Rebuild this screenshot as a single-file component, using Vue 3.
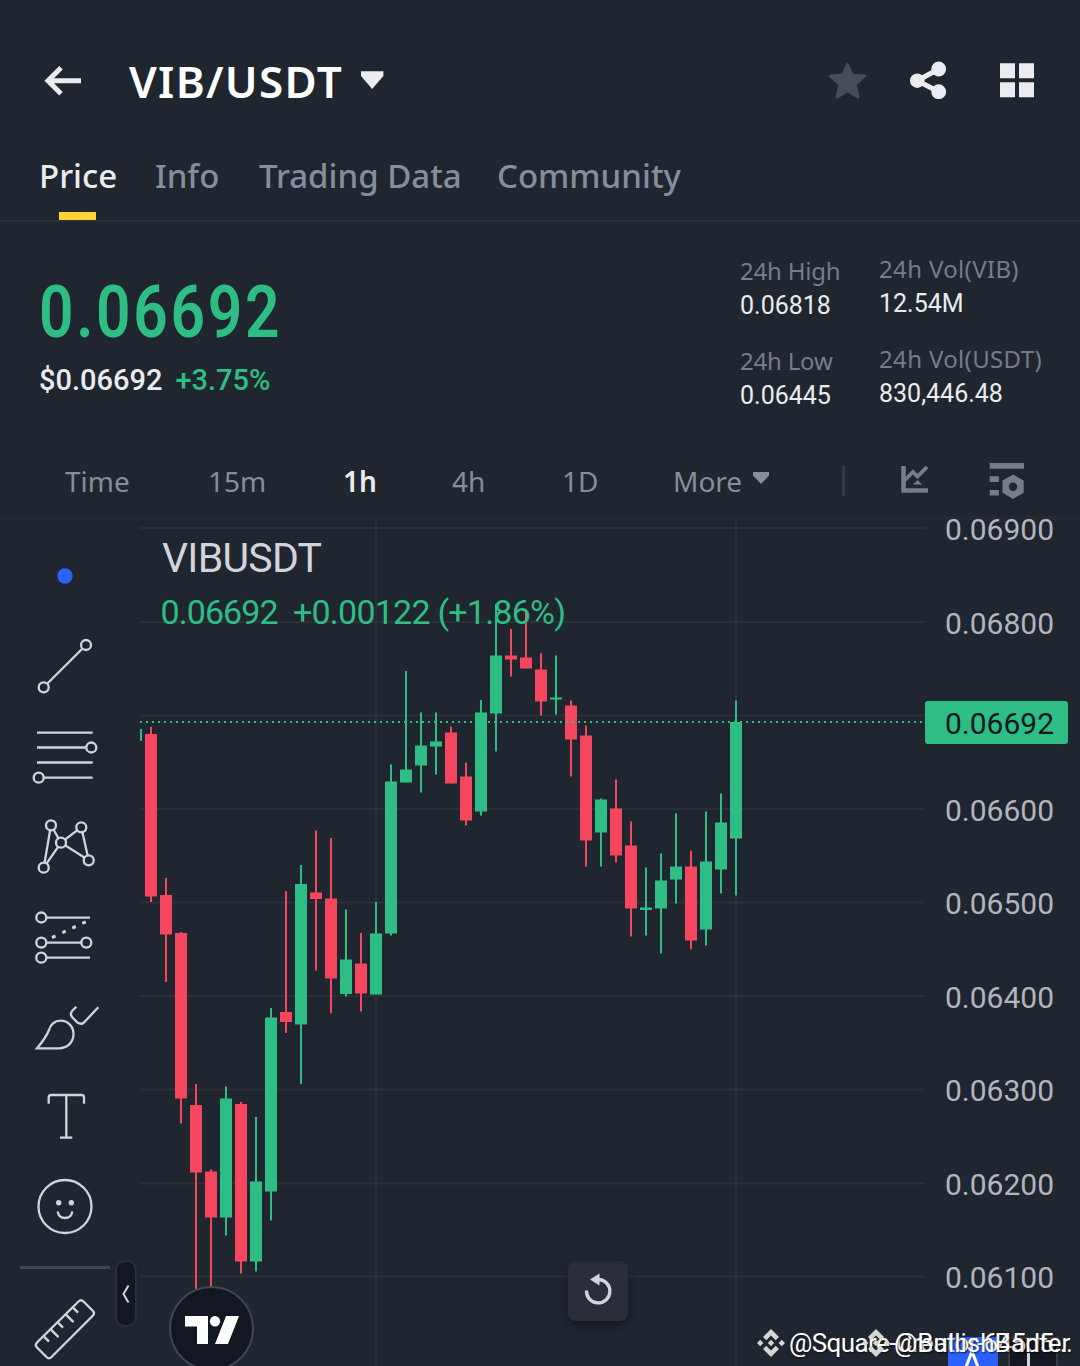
<template>
  <div class="screen">
    <header class="header">
      <svg class="back" viewBox="0 0 40 40" fill="none" stroke="#eaecef" stroke-width="5">
        <path d="M39 20.7H6M19 7.7L6 20.7l13 13" />
      </svg>
      <h1 class="pair"><span>VIB/USDT</span></h1>
      <svg class="caret" viewBox="0 0 24 20" fill="#eaecef"><path d="M1 1.3h22.4V6L12.2 19 1 6z" /></svg>
      <div class="actions">
        <svg class="action" viewBox="0 0 44 44" fill="#474d57" stroke="#474d57" stroke-width="3" stroke-linejoin="round">
          <path d="M22.500 5.500l4.700 10.500 12.300 1-9.300 8.500 2.800 12.500-10.500-6-10.500 6 2.800-12.500-9.300-8.500 12.300-1z" />
        </svg>
        <svg class="action" viewBox="0 0 44 44" fill="#eaecef">
          <path d="M32.700 10L11.300 21.700l21.400 11" fill="none" stroke="#eaecef" stroke-width="5" />
          <circle cx="11.300" cy="21.700" r="7.300" /><circle cx="32.700" cy="10" r="7.400" /><circle cx="32.700" cy="32.700" r="7.400" />
        </svg>
        <svg class="action" viewBox="0 0 44 44" fill="#eaecef">
          <path d="M5 4.300h15v15H5zM24 4.300h15v15H24zM5 23.300h15v15H5zM24 23.300h15v15H24z" />
        </svg>
      </div>
    </header>

    <nav class="tabs">
      <a v-for="t in tabs" :key="t" class="tab" :class="{ active: t === activeTab }" @click="activeTab = t">{{ t }}</a>
    </nav>

    <section class="summary">
      <div class="price-block">
        <div class="price"><span>0.06692</span></div>
        <div class="price-sub"><span class="fiat">$0.06692</span><span class="change">+3.75%</span></div>
      </div>
      <div class="stats stats-left">
        <div v-for="s in rangeStats" :key="s.label" class="stat">
          <div class="stat-label">{{ s.label }}</div>
          <div class="stat-value">{{ s.value }}</div>
        </div>
      </div>
      <div class="stats stats-right">
        <div v-for="s in volumeStats" :key="s.label" class="stat">
          <div class="stat-label">{{ s.label }}</div>
          <div class="stat-value">{{ s.value }}</div>
        </div>
      </div>
    </section>

    <div class="intervals">
      <span v-for="i in intervals" :key="i" class="interval" :class="{ active: i === activeInterval }" @click="activeInterval = i">{{ i }}</span>
      <span class="interval more">More
        <svg class="more-caret" viewBox="0 0 16 12" fill="#848e9c"><path d="M0 0h16v3.500L8 12 0 3.500z" /></svg>
      </span>
      <i class="separator"></i>
      <svg class="tool-icon" viewBox="0 0 36 40" fill="none" stroke="#767c89">
        <path d="M6.500 5v24.500H31" stroke-width="4.500" />
        <path d="M7 20l9-9 4.500 4.500L30 6" stroke-width="3.800" />
        <path d="M20.500 19l4.500 4.500h-9z" fill="#767c89" stroke="none" />
      </svg>
      <svg class="tool-icon" viewBox="0 0 36 40" fill="#767c89">
        <path d="M.7 2H35v5.800H.7zM.7 15.200h9.200V21H.7zM.7 29h9.200v5.500H.7z" />
        <path fill-rule="evenodd" d="M24 13.500l10.700 6v12.300L24 38l-10.500-6.200V19.500zM24 21.500a4.200 4.200 0 100 8.400 4.200 4.200 0 000-8.400z" />
      </svg>
    </div>

    <main class="workspace">
      <aside class="toolbar">
        <svg class="tool" viewBox="0 0 90 90"><circle cx="45" cy="45" r="7.700" fill="#2962ff" /></svg>
        <svg class="tool line" viewBox="0 0 90 90">
          <path d="M27.700 62.300l34.300-34.300" /><circle cx="66" cy="24" r="5" /><circle cx="23.700" cy="66.300" r="5" />
        </svg>
        <svg class="tool line" viewBox="0 0 90 90">
          <path d="M17 21.600h55.700M17 36.500h49M17 51.500h55.700M24 66.700h48.700" />
          <circle cx="71.300" cy="36.500" r="5" /><circle cx="18.700" cy="66.700" r="5" />
        </svg>
        <svg class="tool line" viewBox="0 0 90 90">
          <path d="M31 24.300L23.700 66.700 41 41.700zM41 41.700l20.300-15.400 7.400 33z" />
          <g class="knots">
            <circle cx="31" cy="24.300" r="5" /><circle cx="61.300" cy="26.300" r="5" /><circle cx="41" cy="41.700" r="5" />
            <circle cx="23.700" cy="66.700" r="5" /><circle cx="68.700" cy="59.300" r="5" />
          </g>
        </svg>
        <svg class="tool line" viewBox="0 0 90 90">
          <path d="M27 26.600h43M27 51.600h34M27 66.700h43" />
          <path d="M32 46.500l3.500-1.500M42.300 41.700l3.500-1.500M52.300 37l3.500-1.500M62.300 32.300l3.500-1.500" stroke-width="3" />
          <circle cx="21.300" cy="26.500" r="5" /><circle cx="21.300" cy="51.600" r="5" /><circle cx="66.300" cy="51.600" r="5" /><circle cx="21.300" cy="66.700" r="5" />
        </svg>
        <svg class="tool line" viewBox="0 0 90 90">
          <path d="M17 67.300C24 59 27 54 29 49c2-6 5.500-9.300 11.500-9.300 7 0 13 5.300 13 13.300 0 8-6 14.300-14.500 14.300z" />
          <path d="M56.300 25.700l-3.800 3.800q-3.300 3.500 0 7l5 5q3.500 2.500 6.500 0l14.300-15.200" />
        </svg>
        <svg class="tool line" viewBox="0 0 90 90">
          <path d="M28.700 32.700V26.500q0-2.500 2.500-2.500h30.300q2.500 0 2.500 2.500v6.200M46.300 24v42.700M40 66.700h12.300" />
        </svg>
        <svg class="tool line" viewBox="0 0 90 90">
          <circle cx="45" cy="45.500" r="26.500" />
          <path d="M37.700 50.500q1 6.500 7.300 6.500t7.300-6.500" />
          <circle cx="38.700" cy="41.700" r="2.700" class="dot" /><circle cx="51.300" cy="41.700" r="2.700" class="dot" />
        </svg>
        <hr class="rule" />
        <svg class="tool line" viewBox="0 0 90 90">
          <path d="M58.500 17.500q2.500-2.500 5 0l9.500 9.500q2 2.300 0 4.500L31.500 73q-2.500 2.500-5 0L17 63.500q-2.500-2.500 0-5z" />
          <path d="M24 52.600l5 5M31 45.600l7.500 7.500M38 38.600l5 5M46 30.600l7.500 7.500M53 23.600l5 5" />
        </svg>
        <button class="collapse">
          <svg viewBox="0 0 10 20" fill="none" stroke="#d1d4dc" stroke-width="2"><path d="M7.500 1.500L2.500 10l5 8.500" /></svg>
        </button>
      </aside>

      <section class="chart">
        <svg class="plot" viewBox="140 520 940 846">
          <g fill="#2b2f39">
            <rect v-for="g in gridLines" :key="g.y" x="140" :y="g.y - 1" width="785" height="2" />
            <rect x="375" y="517" width="2" height="849" />
            <rect x="735" y="517" width="2" height="849" />
          </g>
          <rect x="140" y="729" width="2" height="12" fill="#2ebd85" />
          <g v-for="c in candles" :key="c.x" :fill="c.fill">
            <rect :x="c.x - 1" :y="c.high" width="2" :height="c.low - c.high" />
            <rect :x="c.x - 6" :y="c.top" width="12" :height="c.bottom - c.top" />
          </g>
          <path d="M140 722H925" stroke="#2ebd85" stroke-width="2" stroke-dasharray="2 4" />
          <g class="axis">
            <template v-for="g in gridLines" :key="g.label">
              <text v-if="g.label" x="945" :y="g.y + 11.500" textLength="109">{{ g.label }}</text>
            </template>
          </g>
          <rect x="925" y="701" width="143" height="43" rx="3" fill="#2ebd85" />
          <text class="last" x="945" y="733.500" textLength="109">0.06692</text>
          <text class="symbol" x="162" y="571.500" textLength="160">VIBUSDT</text>
          <text class="legend" x="160.500" y="623.500" textLength="118">0.06692</text>
          <text class="legend" x="293" y="623.500" textLength="273">+0.00122 (+1.86%)</text>
        </svg>

        <div class="tv-logo">
          <svg viewBox="0 0 54 28" fill="#fff"><path d="M0 0h23v28H12V10.500H0zM41 0h13L43 28H30z" /><circle cx="30" cy="5.200" r="5.200" /></svg>
        </div>
        <button class="reset">
          <svg viewBox="0 0 30 34" fill="none" stroke="#d1d4dc" stroke-width="3.300">
            <path d="M3.500 17.500a11.700 11.700 0 1011.700-11" /><path d="M16.500.5v12L7 6.500z" fill="#d1d4dc" stroke="none" />
          </svg>
        </button>
        <div class="scale-auto"><svg viewBox="0 0 50 30" fill="none" stroke="#fff" stroke-width="3"><path d="M18 30l6-15.500L30 30" /></svg></div>
        <div class="scale-log"></div>
      </section>
    </main>

    <div v-for="w in watermarks" :key="w.text" class="watermark" :class="w.name">
      <svg viewBox="0 0 28 28" fill="#d6d6d6">
        <path d="M14 0l8 8-3.300 3.300L14 6.600l-4.700 4.700L6 8zM14 28l-8-8 3.300-3.300 4.700 4.700 4.700-4.700L22 20zM14 10.800l3.200 3.200-3.200 3.200-3.200-3.200zM3.200 10.800L6.400 14l-3.200 3.200L0 14zM24.800 10.800L28 14l-3.200 3.200-3.200-3.200z" />
      </svg>
      <span>{{ w.text }}</span>
    </div>
  </div>
</template>

<script setup>
import { ref } from 'vue'

const tabs = ['Price', 'Info', 'Trading Data', 'Community']
const activeTab = ref('Price')

const intervals = ['Time', '15m', '1h', '4h', '1D']
const activeInterval = ref('1h')

const rangeStats = [
  { label: '24h High', value: '0.06818' },
  { label: '24h Low', value: '0.06445' }
]
const volumeStats = [
  { label: '24h Vol(VIB)', value: '12.54M' },
  { label: '24h Vol(USDT)', value: '830,446.48' }
]

const gridLines = [
  { y: 528, label: '0.06900' },
  { y: 622, label: '0.06800' },
  { y: 715.5, label: '' },
  { y: 809, label: '0.06600' },
  { y: 902.5, label: '0.06500' },
  { y: 996, label: '0.06400' },
  { y: 1089.5, label: '0.06300' },
  { y: 1183.5, label: '0.06200' },
  { y: 1276.5, label: '0.06100' }
]

// high, body top, body bottom, low, direction; one candle every 15px
const series = [
  [727, 734, 896.5, 902, 'd'], [878, 895, 934.5, 982, 'd'], [932, 933, 1098.5, 1123.5, 'd'],
  [1084, 1105, 1172.5, 1290, 'd'], [1169.5, 1171.5, 1217.5, 1290, 'd'], [1086.5, 1098.5, 1217.5, 1235.5, 'u'],
  [1102, 1104, 1261.5, 1273.5, 'd'], [1117, 1181.5, 1261.5, 1271.5, 'u'], [1008, 1017.5, 1191.5, 1220.5, 'u'],
  [891, 1012, 1022, 1033, 'd'], [865, 884, 1024.5, 1084, 'u'], [830.5, 892.5, 899, 970.5, 'd'],
  [838, 898.5, 978.5, 1013.5, 'd'], [909.5, 959.5, 994, 996.5, 'u'], [933, 963.5, 993.5, 1011.5, 'd'],
  [902, 933.5, 994.5, 994.5, 'u'], [764.5, 781.5, 933.5, 935.5, 'u'], [671, 769.5, 782.5, 782.5, 'u'],
  [712.5, 745.5, 765.5, 792.5, 'u'], [712.5, 741.5, 746.5, 774.5, 'u'], [726.5, 732.5, 783.5, 783.5, 'd'],
  [762.5, 776.5, 820.5, 825.5, 'd'], [700, 712.5, 811.5, 815.5, 'u'], [604, 655.5, 713.5, 751.5, 'u'],
  [629, 655.5, 659.5, 676.5, 'd'], [611, 657.5, 668.5, 668.5, 'd'], [653.5, 669.5, 701.5, 715.5, 'd'],
  [655.5, 697.5, 699.5, 714.5, 'u'], [700.5, 705.5, 739.5, 776.5, 'd'], [725.5, 735.5, 840.5, 866.5, 'd'],
  [798.5, 799.5, 832.5, 866.5, 'u'], [779.5, 808.5, 855.5, 862.5, 'd'], [821.5, 845.5, 908.5, 936.5, 'd'],
  [867.5, 907.5, 910, 935.5, 'u'], [853.5, 880.5, 908.5, 953.5, 'u'], [813.5, 866.5, 879.5, 903.5, 'u'],
  [850.5, 866.5, 940.5, 949.5, 'd'], [811.5, 861.5, 929.5, 945.5, 'u'], [793.5, 822.5, 869.5, 893.5, 'u'],
  [700.5, 722, 838.5, 895.5, 'u']
]

const candles = series.map(([high, top, bottom, low, dir], i) => ({
  x: 151 + i * 15,
  high,
  top,
  bottom,
  low,
  fill: dir === 'u' ? '#2ebd85' : '#f6465d'
}))

const watermarks = [
  { name: 'first', text: '@Square-Creator-645d5...' },
  { name: 'second', text: '@BullishBanter' }
]
</script>

<style>
body {
  background: #202630;
}
</style>

<style scoped>
* {
  box-sizing: border-box;
}

.screen {
  position: relative;
  display: flex;
  flex-direction: column;
  width: 1080px;
  height: 1366px;
  overflow: hidden;
  background: #202630;
  color: #eaecef;
  font-family: 'Noto Sans', sans-serif;
}

svg {
  display: block;
  flex: none;
}

button {
  padding: 0;
  border: none;
}

.header,
.tabs,
.summary,
.intervals {
  flex: none;
}

.header {
  display: flex;
  align-items: center;
  height: 142px;
  padding: 20px 41px 0 42px;
}

.back { width: 40px; height: 40px; margin-top: -2px; }

.pair {
  width: 213px;
  margin: 0 0 0 47px;
  color: #fff;
  font-size: 44px;
  font-weight: 600;
  letter-spacing: 1.3px;
  white-space: nowrap;
}

.caret { width: 24px; height: 20px; margin: -2px 0 0 18px; }

.actions {
  display: flex;
  gap: 0;
  margin-left: auto;
}

.action { width: 44px; height: 44px; }
.action + .action { margin-left: 37px; }
.action:last-child { margin-left: 45px; }

.tabs {
  display: grid;
  grid-template-columns: 116px 104px 238px auto;
  height: 80px;
  padding-left: 39px;
  border-bottom: 2px solid #2a2f39;
  color: #848e9c;
  font-size: 33px;
  font-weight: 500;
  line-height: 68px;
  white-space: nowrap;
}

.tab {
  position: relative;
}

.tab.active {
  color: #eaecef;
}

.tab.active::after {
  content: '';
  position: absolute;
  left: 20px;
  bottom: 0;
  width: 37px;
  height: 8px;
  background: #fcd535;
}

.summary {
  display: flex;
  height: 222px;
  padding-left: 39px;
}

.price-block {
  width: 701px;
  font-family: Roboto, sans-serif;
}

.price {
  margin-top: 49px;
  color: #2ebd85;
  font-size: 72px;
  font-weight: 600;
  line-height: 84px;
}

.price span {
  display: inline-block;
  letter-spacing: 3.2px;
  transform: scaleX(0.84);
  transform-origin: left;
}

.price-sub {
  display: flex;
  gap: 13px;
  margin-top: 7px;
  font-size: 29px;
  font-weight: 500;
  line-height: 36px;
}

.change { color: #2ebd85; }

.stats {
  padding-top: 31px;
  font-size: 25px;
  line-height: 35px;
  white-space: nowrap;
}

.stats-left { width: 139px; }
.stats-right { padding-top: 29px; }

.stat { height: 90px; }
.stat-label { color: #767c89; font-size: 24px; letter-spacing: -0.2px; }
.stats-right .stat-label { letter-spacing: 0.35px; }
.stat-value { font-family: Roboto, sans-serif; }

.intervals {
  display: grid;
  grid-template-columns: 143px 135px 109px 110px 111px 169px 55px 92px 36px;
  align-items: center;
  height: 76px;
  padding: 1px 0 0 65px;
  border-bottom: 4px solid #252932;
  color: #848e9c;
  font-size: 28px;
}

.interval.active {
  color: #eaecef;
  font-weight: 600;
}

.more {
  display: flex;
  align-items: center;
  gap: 11px;
}

.more-caret { width: 16px; height: 12px; margin-top: -5px; }
.separator { width: 3px; height: 30px; background: #343943; }
.tool-icon { width: 36px; height: 40px; }

.workspace {
  display: flex;
  flex: 1;
  min-height: 0;
}

.toolbar {
  position: relative;
  width: 140px;
  padding: 11px 0 0 20px;
}

.tool { width: 90px; height: 90px; }

.line {
  fill: none;
  stroke: #d1d4dc;
  stroke-width: 2.3;
}

.knots { fill: #202630; }
.dot { fill: #d1d4dc; stroke: none; }

.rule {
  width: 90px;
  height: 3px;
  margin: 15px 0;
  border: none;
  background: #434651;
}

.collapse {
  position: absolute;
  left: 115px;
  top: 740px;
  display: flex;
  align-items: center;
  justify-content: center;
  width: 22px;
  height: 67px;
  border: 2px solid #2a2e39;
  border-radius: 10px;
  background: #131722;
}

.collapse svg { width: 10px; height: 20px; }

.chart {
  position: relative;
  width: 940px;
}

.plot {
  width: 940px;
  height: 846px;
  overflow: visible;
  font-family: Roboto, sans-serif;
}

.axis { fill: #b2b5be; font-size: 30px; }
.last { fill: #131722; font-size: 30px; }
.symbol { fill: #d1d4dc; font-size: 41px; }
.legend { fill: #2ebd85; font-size: 34px; }

.tv-logo {
  position: absolute;
  left: 29px;
  top: 766px;
  width: 85px;
  height: 85px;
  padding: 28px 0 0 14px;
  border: 2px solid #434651;
  border-radius: 50%;
  background: #131722;
}

.tv-logo svg { width: 54px; height: 28px; }

.reset {
  position: absolute;
  left: 428px;
  top: 741px;
  display: flex;
  align-items: center;
  justify-content: center;
  width: 60px;
  height: 60px;
  border-radius: 8px;
  background: #2a2e39;
  box-shadow: 0 4px 8px rgba(0, 0, 0, 0.4);
}

.reset svg { width: 30px; height: 34px; margin-top: -3px; }

.scale-auto,
.scale-log {
  position: absolute;
  top: 817px;
  width: 50px;
  height: 29px;
}

.scale-auto { left: 808px; background: #2962ff; }
.scale-auto svg { width: 50px; height: 30px; }

.scale-log {
  left: 868px;
  border: 2px solid #363a45;
  border-bottom: none;
  background: #131722;
}

.scale-log::after {
  content: '';
  display: block;
  width: 3px;
  height: 14px;
  margin: 14px 0 0 17px;
  background: #d1d4dc;
}

.watermark {
  position: absolute;
  top: 1328px;
  display: flex;
  align-items: center;
  gap: 4px;
  color: #fff;
  font-family: Roboto, sans-serif;
  font-size: 26px;
  line-height: 30px;
  white-space: nowrap;
  text-shadow: 1px 1px 2px rgba(0, 0, 0, 0.6);
}

.watermark svg { width: 28px; height: 28px; }
.first { left: 757px; letter-spacing: -0.6px; }
.second { left: 862px; }
</style>
